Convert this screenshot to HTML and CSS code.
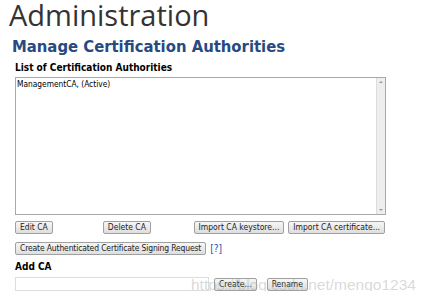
FILE: index.html
```html
<!DOCTYPE html>
<html>
<head>
  <meta charset="UTF-8">
  <title>Administration</title>
  <link rel="stylesheet" href="styles.css">
</head>
<body>
  <h1 class="page-title">Administration</h1>
  <div class="content">
    <h2 class="section-title">Manage Certification Authorities</h2>

    <!-- CA list -->
    <h3 class="label">List of Certification Authorities</h3>
    <div class="listbox">
      <div class="list-items">
        <div class="list-item">ManagementCA, (Active)</div>
      </div>
      <div class="scrollbar">
        <span class="arrow up"></span>
        <span class="arrow down"></span>
      </div>
    </div>

    <div class="button-row">
      <button class="btn">Edit CA</button>
      <button class="btn">Delete CA</button>
      <span class="spacer"></span>
      <button class="btn">Import CA keystore...</button>
      <button class="btn">Import CA certificate...</button>
    </div>

    <div class="csr-row">
      <button class="btn csr-btn">Create Authenticated Certificate Signing Request</button>
      <a class="help" href="#">[?]</a>
    </div>

    <!-- Add CA -->
    <h3 class="label add-label">Add CA</h3>
    <div class="add-row">
      <input type="text" class="ca-name">
      <button class="btn">Create...</button>
      <button class="btn">Rename</button>
    </div>
  </div>

  <div class="watermark">https://blog.csdn.net/mengo1234</div>
</body>
</html>
```

FILE: styles.css
```css
body {
  margin: 0;
  background: #fff;
  font-family: "DejaVu Sans", Verdana, sans-serif;
  font-stretch: condensed;
  color: #000;
  position: relative;
  overflow: hidden;
}
.page-title {
  margin: 0;
  padding: 0 0 0 9px;
  font-family: "Open Sans", sans-serif;
  font-stretch: normal;
  font-weight: normal;
  font-size: 29px;
  line-height: 30px;
  color: #333;
}
.content {
  padding: 0 0 0 15px;
  width: 371px;
}
.section-title {
  margin: 7px 0 0 -3px;
  font-size: 16.5px;
  line-height: 20px;
  font-weight: bold;
  color: #284a80;
}
.label {
  margin: 5px 0 0;
  font-size: 10px;
  line-height: 12px;
  font-weight: bold;
}
.listbox {
  margin-top: 3px;
  height: 136px;
  border: 1px solid #a9a9a9;
  display: flex;
}
.list-items {
  flex: 1;
  padding: 1px 1px;
}
.list-item {
  font-size: 8.3px;
  line-height: 11px;
}
.scrollbar {
  width: 8px;
  background: #eee;
  border-left: 1px solid #ddd;
  display: flex;
  flex-direction: column;
  justify-content: space-between;
  align-items: center;
  padding: 3px 0;
}
.arrow {
  width: 0;
  height: 0;
  border-left: 2px solid transparent;
  border-right: 2px solid transparent;
}
.arrow.up {
  border-bottom: 2px solid #999;
}
.arrow.down {
  border-top: 2px solid #999;
}
.button-row {
  display: flex;
  margin-top: 6px;
  gap: 4px;
}
.button-row .btn:nth-child(2) {
  margin-left: 46px;
}
.button-row .btn:last-child {
  margin-right: 1px;
}
.spacer {
  flex: 1;
}
.btn {
  font-family: "DejaVu Sans", Verdana, sans-serif;
  font-stretch: condensed;
  font-size: 8.5px;
  line-height: 11px;
  padding: 0 4px;
  height: 13px;
  border: 1px solid #a0a0a0;
  border-radius: 2px;
  background: linear-gradient(#f6f6f6, #dedede);
  color: #222;
  margin: 0;
}
.csr-btn {
  letter-spacing: -0.15px;
}
.csr-row {
  margin-top: 8px;
  display: flex;
  align-items: center;
  gap: 4px;
}
.help {
  color: #1f4fb0;
  text-decoration: none;
  font-size: 10px;
}
.add-label {
  margin-top: 6px;
}
.add-row {
  margin-top: 4px;
  display: flex;
  align-items: center;
}
.ca-name {
  width: 192px;
  height: 12px;
  padding: 0;
  border: 1px solid #ddd;
  margin: 0 5px 0 0;
}
.add-row .btn + .btn {
  margin-left: 10px;
}
.watermark {
  position: absolute;
  left: 191px;
  top: 276px;
  font-family: "Liberation Sans", Arial, sans-serif;
  font-stretch: normal;
  font-size: 15.5px;
  color: rgba(170, 170, 170, 0.45);
  pointer-events: none;
}
```
